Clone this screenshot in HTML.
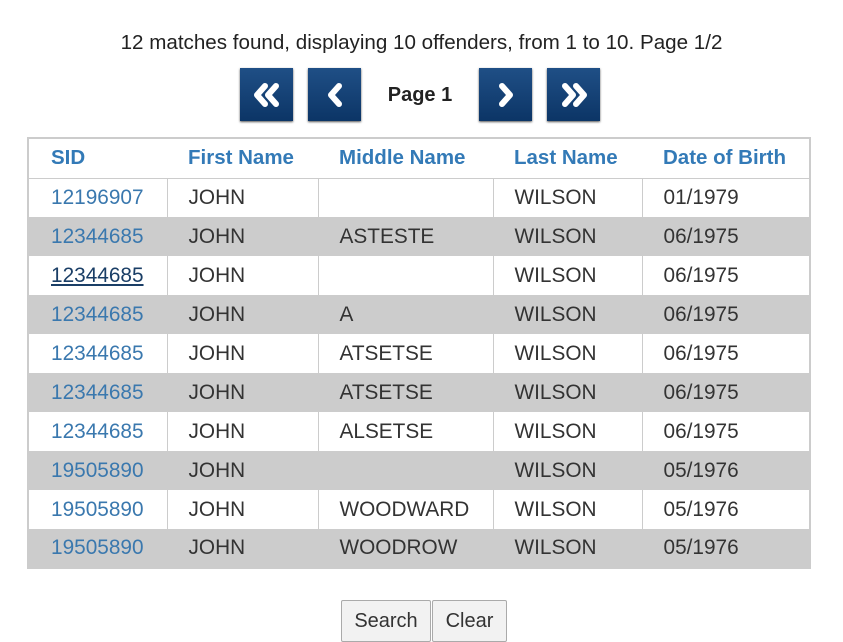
<!DOCTYPE html>
<html><head><style>
body{margin:0;width:843px;height:634px;overflow:hidden;background:#fff;font-family:"Liberation Sans",sans-serif;position:relative;color:#333}
.msg{position:absolute;top:31px;left:0;width:843px;text-align:center;font-size:20.6px;color:#222}
.btn{position:absolute;top:68px;width:53px;height:53px;background:linear-gradient(#1f4f86,#0c3566);box-shadow:0 1px 2px #555;display:flex;align-items:center;justify-content:center}
.pg{position:absolute;top:84px;left:370px;width:100px;text-align:center;font-size:20px;font-weight:bold;color:#222}
table{position:absolute;top:137px;left:27px;width:784px;border-collapse:collapse;border:2px solid #ccc;font-size:20.8px}
td,th{height:39px;padding:0 0 0 21px;text-align:left;border-left:1px solid #ccc;box-sizing:border-box}
th{color:#337ab7;font-weight:bold;height:40px;border-left:none;border-bottom:1px solid #ccc;font-size:20.5px}
tr:nth-child(odd) td{background:#ccc}
td:first-child{border-left:none;color:#3a78ae;padding-left:22px}
th:first-child{padding-left:22px}
.u{text-decoration:underline;color:#1a3e66!important}
.b{position:absolute;top:600px;height:40px;border:1px solid #aaa;background:#f2f2f2;font-size:20px;color:#333;display:flex;align-items:center;justify-content:center;border-radius:2px}
</style></head><body>
<div class="msg">12 matches found, displaying 10 offenders, from 1 to 10. Page 1/2</div>
<div class="btn" style="left:240px"><svg width="34" height="26"><path d="M15 4 7 13l8 9M26 4l-8 9 8 9" stroke="#fff" stroke-width="6" fill="none" stroke-linecap="round" stroke-linejoin="round"/></svg></div>
<div class="btn" style="left:308px"><svg width="30" height="26"><path d="M19 4l-8 9 8 9" stroke="#fff" stroke-width="6" fill="none" stroke-linecap="round" stroke-linejoin="round"/></svg></div>
<div class="pg">Page 1</div>
<div class="btn" style="left:479px"><svg width="30" height="26"><path d="M11 4l8 9-8 9" stroke="#fff" stroke-width="6" fill="none" stroke-linecap="round" stroke-linejoin="round"/></svg></div>
<div class="btn" style="left:547px"><svg width="34" height="26"><path d="M8 4l8 9-8 9M19 4l8 9-8 9" stroke="#fff" stroke-width="6" fill="none" stroke-linecap="round" stroke-linejoin="round"/></svg></div>
<table>
<colgroup><col style="width:139px"><col style="width:151px"><col style="width:175px"><col style="width:149px"><col></colgroup>
<tr><th>SID</th><th>First Name</th><th>Middle Name</th><th>Last Name</th><th>Date of Birth</th></tr>
<tr><td>12196907</td><td>JOHN</td><td></td><td>WILSON</td><td>01/1979</td></tr>
<tr><td>12344685</td><td>JOHN</td><td>ASTESTE</td><td>WILSON</td><td>06/1975</td></tr>
<tr><td class="u">12344685</td><td>JOHN</td><td></td><td>WILSON</td><td>06/1975</td></tr>
<tr><td>12344685</td><td>JOHN</td><td>A</td><td>WILSON</td><td>06/1975</td></tr>
<tr><td>12344685</td><td>JOHN</td><td>ATSETSE</td><td>WILSON</td><td>06/1975</td></tr>
<tr><td>12344685</td><td>JOHN</td><td>ATSETSE</td><td>WILSON</td><td>06/1975</td></tr>
<tr><td>12344685</td><td>JOHN</td><td>ALSETSE</td><td>WILSON</td><td>06/1975</td></tr>
<tr><td>19505890</td><td>JOHN</td><td></td><td>WILSON</td><td>05/1976</td></tr>
<tr><td>19505890</td><td>JOHN</td><td>WOODWARD</td><td>WILSON</td><td>05/1976</td></tr>
<tr><td>19505890</td><td>JOHN</td><td>WOODROW</td><td>WILSON</td><td>05/1976</td></tr>
</table>
<div class="b" style="left:341px;width:88px">Search</div>
<div class="b" style="left:432px;width:73px">Clear</div>
</body></html>
